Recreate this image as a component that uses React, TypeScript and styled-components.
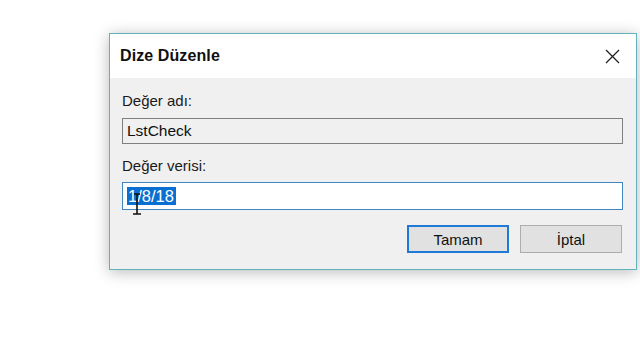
import React from "react";
import styled, { createGlobalStyle } from "styled-components";

const Global = createGlobalStyle`
  html, body { margin: 0; padding: 0; background: #ffffff; }
  body { width: 640px; height: 360px; overflow: hidden; font-family: "Liberation Sans", Arial, sans-serif; }
`;

const Page = styled.div`
  padding: 33px 0 0 109px;
`;

const Dialog = styled.div`
  width: 526px;
  border: 1px solid #5fb3ba;
  background: #f0f0f0;
  box-shadow: 0 2px 14px rgba(0, 0, 0, 0.28);
  display: flex;
  flex-direction: column;
`;

const TitleBar = styled.div`
  height: 44px;
  background: #ffffff;
  display: flex;
  align-items: center;
  justify-content: space-between;
  padding: 0 16px 0 10px;
`;

const Title = styled.div`
  font-size: 16px;
  font-weight: bold;
  color: #111;
  letter-spacing: 0.1px;
`;

const CloseButton = styled.div`
  width: 16px;
  height: 16px;
  display: flex;
  align-items: center;
  justify-content: center;
`;

const Body = styled.div`
  padding: 14px 13px 16px 12px;
  display: flex;
  flex-direction: column;
`;

const Label = styled.div<{ $gap: number }>`
  height: 18px;
  line-height: 18px;
  font-size: 15px;
  color: #1a1a1a;
  margin-bottom: ${(p) => p.$gap}px;
`;

const Field = styled.div<{ $active?: boolean; $h: number }>`
  position: relative;
  height: ${(p) => p.$h}px;
  box-sizing: border-box;
  border: 1px solid ${(p) => (p.$active ? "#3f86c0" : "#7f7f7f")};
  background: ${(p) => (p.$active ? "#ffffff" : "#f0f0f0")};
  display: flex;
  align-items: center;
  padding-left: ${(p) => (p.$active ? 4 : 4)}px;
  font-size: ${(p) => (p.$active ? 16.5 : 15.5)}px;
  color: #111;
`;

const Selection = styled.span`
  background: #0a6fd0;
  color: #ffffff;
  line-height: 18px;
  padding: 0 2px 0 1px;
`;

const Cursor = styled.svg`
  position: absolute;
  left: 9px;
  top: 9px;
`;

const ButtonRow = styled.div`
  margin-top: 15px;
  display: flex;
  justify-content: flex-end;
  gap: 11px;
  padding-right: 1px;
`;

const Button = styled.div<{ $focused?: boolean }>`
  width: 102px;
  height: 28px;
  box-sizing: border-box;
  background: #e1e1e1;
  border: ${(p) => (p.$focused ? "2px solid #1e7ad6" : "1px solid #adadad")};
  display: flex;
  align-items: center;
  justify-content: center;
  font-size: 15px;
  color: #111;
`;

export default function App() {
  return (
    <>
      <Global />
      <Page>
        <Dialog>
          <TitleBar>
            <Title>Dize Düzenle</Title>
            <CloseButton>
              <svg width="15" height="15" viewBox="0 0 15 15">
                <path d="M1 1L14 14M14 1L1 14" stroke="#222" strokeWidth="1.3" />
              </svg>
            </CloseButton>
          </TitleBar>
          <Body>
            <Label $gap={8}>Değer adı:</Label>
            <Field $h={26}>LstCheck</Field>
            <div style={{ height: 13 }} />
            <Label $gap={7}>Değer verisi:</Label>
            <Field $h={28} $active>
              <Selection>1/8/18</Selection>
              <Cursor width="10" height="24" viewBox="0 0 10 24">
                <path d="M2 2H8M5 2V22M1 22H9" stroke="#111" strokeWidth="1.6" fill="none" />
              </Cursor>
            </Field>
            <ButtonRow>
              <Button $focused>Tamam</Button>
              <Button>İptal</Button>
            </ButtonRow>
          </Body>
        </Dialog>
      </Page>
    </>
  );
}
